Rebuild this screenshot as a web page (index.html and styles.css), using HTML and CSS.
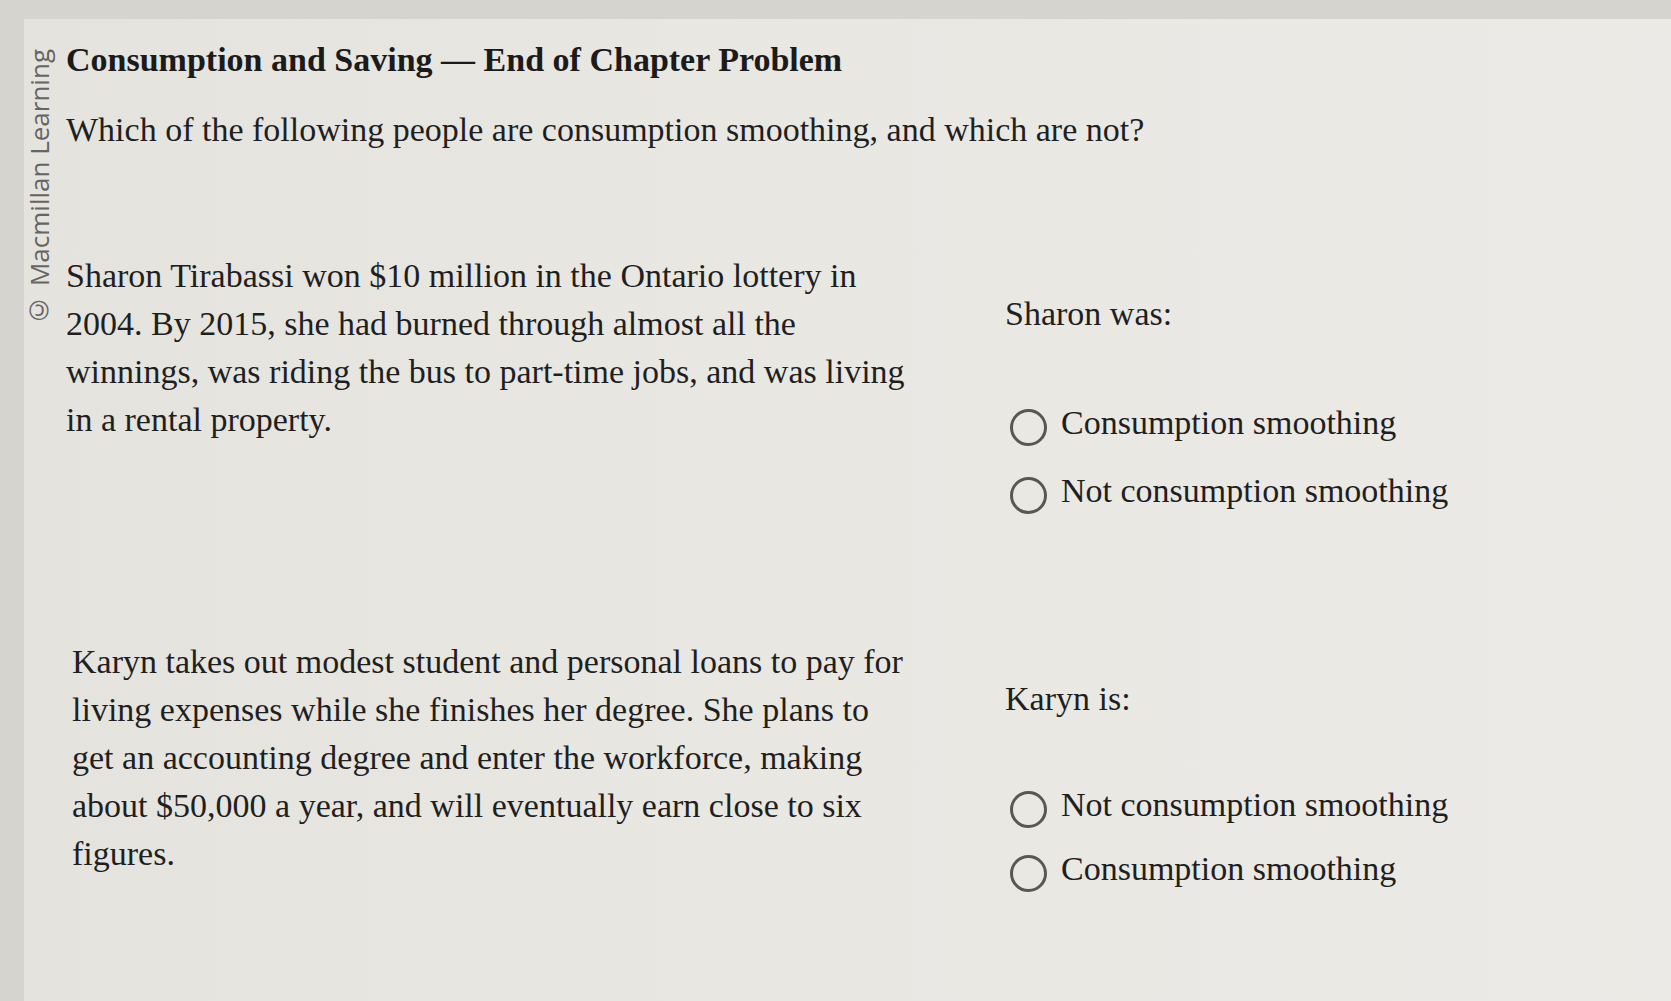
FILE: index.html
```html
<!DOCTYPE html>
<html lang="en">
<head>
<meta charset="utf-8">
<title>Consumption and Saving — End of Chapter Problem</title>
<link rel="stylesheet" href="styles.css">
</head>
<body>
<div class="page">
  <div class="credit">© Macmillan Learning</div>
  <main class="content">
    <h1 class="title">Consumption and Saving — End of Chapter Problem</h1>
    <p class="prompt">Which of the following people are consumption smoothing, and which are not?</p>

    <section class="item item-sharon">
      <p class="item-text">Sharon Tirabassi won $10 million in the Ontario lottery in<br>2004. By 2015, she had burned through almost all the<br>winnings, was riding the bus to part-time jobs, and was living<br>in a rental property.</p>
      <div class="item-side">
        <div class="item-label">Sharon was:</div>
        <div class="options">
          <label class="option"><input class="radio" type="radio" name="sharon"><span>Consumption smoothing</span></label>
          <label class="option"><input class="radio" type="radio" name="sharon"><span>Not consumption smoothing</span></label>
        </div>
      </div>
    </section>

    <section class="item item-karyn">
      <p class="item-text">Karyn takes out modest student and personal loans to pay for<br>living expenses while she finishes her degree. She plans to<br>get an accounting degree and enter the workforce, making<br>about $50,000 a year, and will eventually earn close to six<br>figures.</p>
      <div class="item-side">
        <div class="item-label">Karyn is:</div>
        <div class="options">
          <label class="option"><input class="radio" type="radio" name="karyn"><span>Not consumption smoothing</span></label>
          <label class="option"><input class="radio" type="radio" name="karyn"><span>Consumption smoothing</span></label>
        </div>
      </div>
    </section>
  </main>
</div>
</body>
</html>
```

FILE: styles.css
```css
html, body {
  margin: 0;
  padding: 0;
}

body {
  width: 1671px;
  height: 1001px;
  box-sizing: border-box;
  padding: 19px 0 0 24px;
  background: #d5d4cf;
  overflow: hidden;
  font-family: "Liberation Serif", "Times New Roman", serif;
  color: #1f1f1f;
}

.page {
  display: flex;
  align-items: flex-start;
  height: 982px;
  background: linear-gradient(90deg, #e4e3de 0%, #e8e7e2 40%, #ebeae6 100%);
}

.credit {
  writing-mode: vertical-rl;
  transform: rotate(180deg);
  font-family: "Open Sans", "Noto Sans", sans-serif;
  font-size: 26px;
  line-height: 26px;
  color: #656563;
  white-space: nowrap;
  margin: 30px 14px 0 2px;
}

.content {
  padding-top: 21px;
}

.title {
  margin: 0;
  font-size: 34px;
  line-height: 40px;
  font-weight: 700;
  color: #1b1b1b;
  white-space: nowrap;
}

.prompt {
  margin: 30px 0 0;
  font-size: 34px;
  line-height: 40px;
  white-space: nowrap;
}

.item {
  display: grid;
  grid-template-columns: 939px auto;
  align-items: start;
}

.item-sharon {
  margin-top: 102px;
}

.item-karyn {
  margin-top: 124px;
}

.item-text {
  margin: 0;
  font-size: 34px;
  line-height: 48px;
  white-space: nowrap;
}

.item-karyn .item-text {
  padding-left: 6px;
}

.item-side {
  padding-top: 42px;
}

.item-karyn .item-side {
  padding-top: 41px;
}

.item-label {
  font-size: 34px;
  line-height: 40px;
  white-space: nowrap;
}

.options {
  display: flex;
  flex-direction: column;
  gap: 25px;
  margin-top: 69px;
}

.item-karyn .options {
  gap: 21px;
  margin-top: 66px;
}

.option {
  display: flex;
  align-items: flex-start;
  gap: 14px;
  padding-left: 5px;
  font-size: 34px;
  line-height: 40px;
  white-space: nowrap;
}

.radio {
  appearance: none;
  -webkit-appearance: none;
  flex: none;
  width: 37px;
  height: 37px;
  margin: 6px 0 0;
  box-sizing: border-box;
  border: 3px solid #575755;
  border-radius: 50%;
  background: transparent;
}
```
